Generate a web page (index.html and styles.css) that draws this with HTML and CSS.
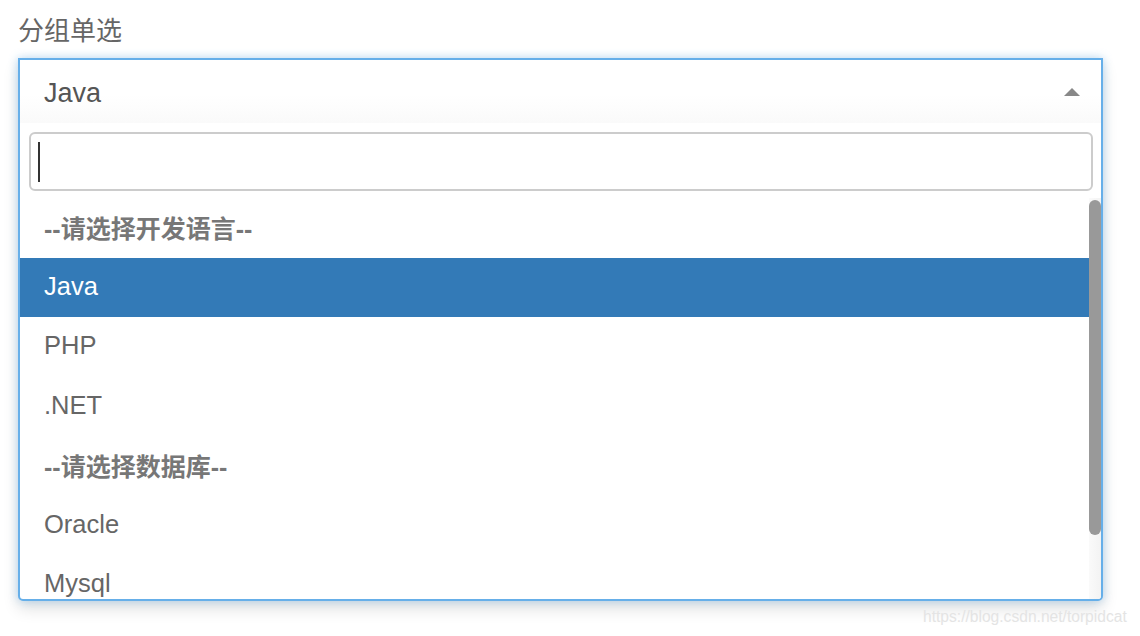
FILE: index.html
```html
<!DOCTYPE html>
<html lang="zh-CN">
<head>
<meta charset="utf-8">
<title>分组单选</title>
<link rel="stylesheet" href="styles.css">
</head>
<body>
<div class="field">
  <div class="label">分组单选</div>
  <div class="select">
    <div class="head">
      <span class="value">Java</span>
      <span class="arrow"></span>
    </div>
    <div class="search"><span class="caret"></span></div>
    <div class="results">
      <ul class="options">
        <li class="group">--请选择开发语言--</li>
        <li class="opt active">Java</li>
        <li class="opt">PHP</li>
        <li class="opt">.NET</li>
        <li class="group">--请选择数据库--</li>
        <li class="opt">Oracle</li>
        <li class="opt">Mysql</li>
      </ul>
      <div class="track"><div class="thumb"></div></div>
    </div>
  </div>
</div>
<div class="watermark">https://blog.csdn.net/torpidcat</div>
</body>
</html>
```
FILE: styles.css
```css
html, body {
  margin: 0;
  padding: 0;
  background: #fff;
}
body {
  font-family: "Liberation Sans", Arial, "Noto Sans CJK SC", sans-serif;
  width: 1140px;
  height: 636px;
  overflow: hidden;
  position: relative;
}
.field {
  padding: 12px 37px 0 18px;
}
.label {
  font-size: 26px;
  line-height: 34px;
  color: #666;
  height: 46px;
  font-family: "Noto Sans CJK SC", sans-serif;
}
.select {
  width: 1081px;
  height: 539px;
  border: 2px solid #66afe9;
  border-radius: 0 0 5px 5px;
  box-shadow: 0 0 10px rgba(102, 175, 233, 0.45), 0 8px 16px rgba(0, 0, 0, 0.12);
  display: flex;
  flex-direction: column;
  overflow: hidden;
  background: #fff;
}
.head {
  height: 63px;
  flex: none;
  display: flex;
  align-items: center;
  justify-content: space-between;
  padding: 0 21px 0 24px;
  background: linear-gradient(#fff 55%, #fafafa);
}
.value {
  font-size: 27px;
  color: #555;
  padding-top: 3px;
}
.arrow {
  width: 0;
  height: 0;
  border-left: 8px solid transparent;
  border-right: 8px solid transparent;
  border-bottom: 8px solid #888;
}
.search {
  flex: none;
  height: 55px;
  margin: 9px 8px 7px 9px;
  border: 2px solid #ccc;
  border-radius: 6px;
  display: flex;
  align-items: center;
  padding-left: 7px;
}
.caret {
  width: 2px;
  height: 40px;
  background: #333;
}
.results {
  flex: 1;
  display: flex;
  min-height: 0;
}
.options {
  list-style: none;
  margin: 0;
  padding: 0;
  flex: 1;
  overflow: hidden;
}
.options li {
  height: 59.5px;
  line-height: 57px;
  padding-left: 24px;
  font-size: 25.5px;
  color: #666;
}
.options li.group {
  font-weight: bold;
  color: #777;
  font-size: 25px;
  line-height: 62px;
  font-family: "Liberation Sans", "Noto Sans CJK SC", sans-serif;
}
.options li.active {
  background: #337ab7;
  color: #fff;
}
.track {
  width: 12px;
  flex: none;
  background: linear-gradient(90deg, #fafafa, #f3f3f3);
  padding-top: 2px;
}
.thumb {
  height: 335px;
  background: #999;
  border-radius: 6px;
}
.watermark {
  position: absolute;
  left: 923px;
  top: 608px;
  font-size: 15.6px;
  color: #e4e4e4;
}
```
